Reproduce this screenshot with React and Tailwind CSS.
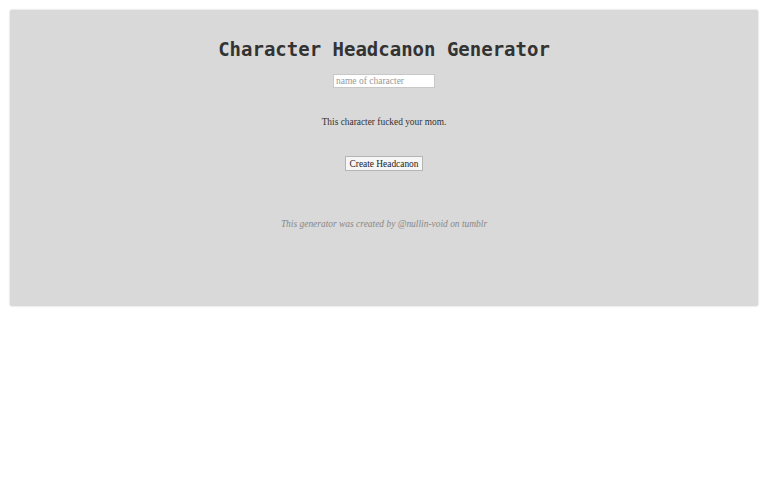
import React, { useState } from 'react';

const App = () => {
  const [name, setName] = useState('');

  return (
    <div className="min-h-[480px] bg-white p-[10px] font-['Liberation_Serif',serif]">
      {/* Generator card */}
      <div className="h-[296px] bg-[#d9d9d9] rounded-[2px] shadow-[0_0_2px_rgba(0,0,0,0.25)] flex flex-col items-center pt-[28px]">
        <h1 className="font-['DejaVu_Sans_Mono',monospace] font-bold text-[19px] leading-[23px] text-[#333]">
          Character Headcanon Generator
        </h1>
        <input
          type="text"
          value={name}
          onChange={(e) => setName(e.target.value)}
          placeholder="name of character"
          className="mt-[13px] w-[102px] h-[14px] bg-white border border-[#c8c8c8] px-[2px] text-[9.5px] leading-[12px] text-[#333] placeholder:text-[#999] outline-none"
        />
        <p className="mt-[28px] text-[9.4px] leading-[12px] text-[#333]">
          This character fucked your mom.
        </p>
        <button className="mt-[28px] h-[15px] px-[4px] bg-[#f6f6f6] border border-[#b4b4b4] text-[9.4px] leading-[12px] text-[#222]">
          Create Headcanon
        </button>
        <p className="mt-[47px] text-[9.45px] leading-[12px] italic text-[#888]">
          This generator was created by @nullin-void on tumblr
        </p>
      </div>
    </div>
  );
};

export default App;
